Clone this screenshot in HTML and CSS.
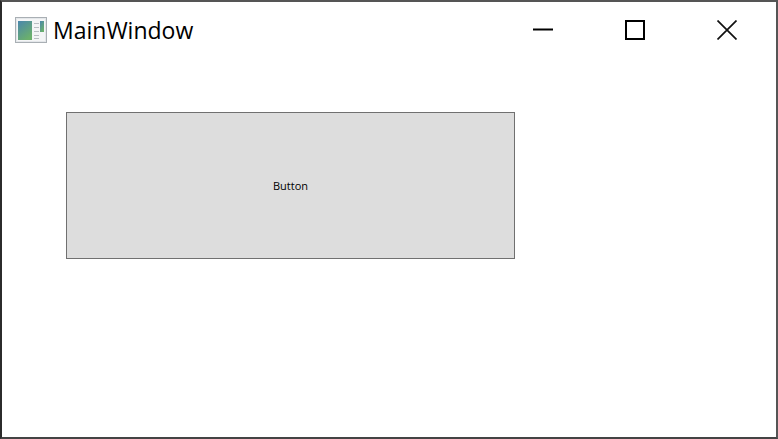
FILE: index.html
```html
<!DOCTYPE html>
<html lang="en">
<head>
    <meta charset="UTF-8">
    <title>MainWindow</title>
    <link rel="stylesheet" href="styles.css">
</head>
<body>
    <div class="window">
        <!-- Title bar -->
        <div class="titlebar">
            <svg class="app-icon" width="32" height="26" viewBox="0 0 32 26">
                <defs>
                    <linearGradient id="pane" x1="0" y1="0" x2="0.6" y2="1">
                        <stop offset="0" stop-color="#4a86ad"/>
                        <stop offset="1" stop-color="#6bb06c"/>
                    </linearGradient>
                </defs>
                <rect x="0.5" y="0.5" width="31" height="25" fill="#e4e7ea" stroke="#a9afb4"/>
                <rect x="2" y="2" width="28" height="22" fill="#f4f5f6"/>
                <rect x="3" y="4" width="14" height="19" fill="url(#pane)"/>
                <rect x="19" y="6" width="5" height="1" fill="#b9bec2"/>
                <rect x="19" y="10" width="5" height="1" fill="#b9bec2"/>
                <rect x="19" y="14" width="5" height="1" fill="#b9bec2"/>
                <rect x="19" y="18" width="5" height="1" fill="#b9bec2"/>
                <rect x="19" y="21" width="5" height="1" fill="#b9bec2"/>
                <rect x="25" y="4" width="4" height="11" fill="url(#pane)"/>
            </svg>
            <span class="title">MainWindow</span>
            <div class="controls">
                <button class="control">
                    <svg width="20" height="20" viewBox="0 0 20 20"><path d="M0 9.5H20" stroke="#000" stroke-width="2" fill="none"/></svg>
                </button>
                <button class="control">
                    <svg width="20" height="20" viewBox="0 0 20 20"><rect x="1" y="1" width="18" height="18" stroke="#000" stroke-width="2" fill="none"/></svg>
                </button>
                <button class="control">
                    <svg width="20" height="20" viewBox="0 0 20 20"><path d="M0.5 0.5L19.5 19.5M19.5 0.5L0.5 19.5" stroke="#111" stroke-width="1.7" fill="none"/></svg>
                </button>
            </div>
        </div>
        <!-- Content -->
        <div class="content">
            <button class="main-button">Button</button>
        </div>
    </div>
</body>
</html>
```

FILE: styles.css
```css
html, body {
    height: 100%;
}

body {
    margin: 0;
    background-color: white;
    font-family: 'Open Sans', 'Liberation Sans', sans-serif;
}

.window {
    box-sizing: border-box;
    height: 100%;
    display: flex;
    flex-direction: column;
    border: 2px solid #555;
    border-left-color: #2b2b2b;
    border-bottom-color: #444;
    background-color: white;
}

.titlebar {
    display: flex;
    align-items: center;
    height: 56px;
    padding-left: 13px;
}

.app-icon {
    flex-shrink: 0;
}

.title {
    margin-left: 6px;
    font-size: 23px;
    color: black;
}

.controls {
    display: flex;
    margin-left: auto;
    margin-right: 3px;
}

.control {
    width: 92px;
    height: 56px;
    padding: 0;
    border: none;
    background-color: transparent;
    display: flex;
    justify-content: center;
    align-items: center;
}

.content {
    flex: 1;
    padding: 54px 0 0 64px;
}

.main-button {
    display: block;
    width: 449px;
    height: 147px;
    padding: 0;
    border: 1px solid #707070;
    background-color: #dddddd;
    color: black;
    font-family: 'Open Sans', 'Liberation Sans', sans-serif;
    font-size: 11px;
}
```
